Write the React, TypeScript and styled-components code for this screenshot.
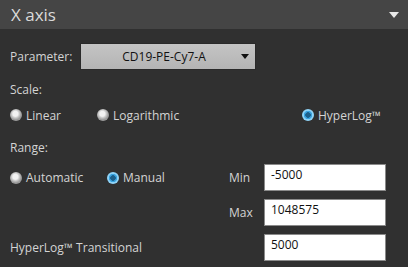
import styled, { createGlobalStyle } from 'styled-components';

const GlobalStyle = createGlobalStyle`
  html, body {
    margin: 0;
    padding: 0;
    background: #303030;
  }
  body {
    font-family: "Open Sans", "Liberation Sans", sans-serif;
  }
`;

const Panel = styled.div`
  width: 408px;
  height: 267px;
  background: #303030;
  color: #d4d4d4;
  font-size: 12px;
  display: flex;
  flex-direction: column;
  overflow: hidden;
`;

const Header = styled.div`
  height: 29px;
  background: #454545;
  display: flex;
  align-items: center;
  justify-content: space-between;
  padding: 0 9px 0 11px;
  font-size: 17px;
  color: #dadada;
`;

const HeaderArrow = styled.div`
  width: 0;
  height: 0;
  border-left: 5px solid transparent;
  border-right: 5px solid transparent;
  border-top: 6px solid #e8e8e8;
`;

const Body = styled.div`
  display: flex;
  flex-direction: column;
  padding: 14px 22px 0 10px;
`;

const Row = styled.div<{ $height: number; $mt?: number }>`
  display: flex;
  align-items: center;
  height: ${p => p.$height}px;
  margin-top: ${p => p.$mt ?? 0}px;
`;

const FieldLabel = styled.span`
  width: 70px;
  white-space: nowrap;
`;

const Select = styled.div`
  width: 176px;
  height: 27px;
  box-sizing: border-box;
  border: 1px solid #2a2a2a;
  background: linear-gradient(#c4c4c4, #b4b4b4);
  display: flex;
  align-items: center;
  color: #111;
  padding: 0 6px 0 0;
`;

const SelectText = styled.span`
  flex: 1;
  text-align: center;
  padding-left: 6px;
`;

const SelectArrow = styled.div`
  width: 0;
  height: 0;
  border-left: 4px solid transparent;
  border-right: 4px solid transparent;
  border-top: 5px solid #111;
`;

const RadioOption = styled.label<{ $width?: number }>`
  display: flex;
  align-items: center;
  gap: 4px;
  width: ${p => (p.$width ? `${p.$width}px` : 'auto')};
  white-space: nowrap;
`;

const RadioDot = styled.span<{ $checked?: boolean }>`
  width: 12px;
  height: 12px;
  border-radius: 50%;
  box-sizing: border-box;
  flex-shrink: 0;
  ${p =>
    p.$checked
      ? `background: radial-gradient(circle, #1c5f8a 0 2.5px, #3aa4e0 3px 4px, #8fd3f7 4.5px 6px);`
      : `background: radial-gradient(circle at 45% 40%, #f2f2f2 0 2.5px, #c8c8c8 4px, #9a9a9a 6px);`}
`;

const RangeGrid = styled.div`
  display: grid;
  grid-template-columns: 1fr 35px 122px;
  grid-auto-rows: 27px;
  row-gap: 8px;
  margin-top: 8px;
  align-items: center;
`;

const RadioGroup = styled.div`
  display: flex;
  align-items: center;
`;

const InputLabel = styled.span`
  white-space: nowrap;
`;

const NumberBox = styled.div`
  height: 27px;
  box-sizing: border-box;
  background: #fff;
  border: 1px solid #8a8a8a;
  color: #111;
  padding: 2px 6px;
  font-size: 12px;
  line-height: 16px;
`;

const Radio = ({ label, checked, width }: { label: string; checked?: boolean; width?: number }) => (
  <RadioOption $width={width}>
    <RadioDot $checked={checked} />
    {label}
  </RadioOption>
);

export default function App() {
  return (
    <Panel>
      <GlobalStyle />
      <Header>
        <span>X axis</span>
        <HeaderArrow />
      </Header>
      <Body>
        <Row $height={27}>
          <FieldLabel>Parameter:</FieldLabel>
          <Select>
            <SelectText>CD19-PE-Cy7-A</SelectText>
            <SelectArrow />
          </Select>
        </Row>
        <Row $height={18} $mt={10}>Scale:</Row>
        <Row $height={18} $mt={8}>
          <Radio label="Linear" width={87} />
          <Radio label="Logarithmic" width={205} />
          <Radio label="HyperLog™" checked />
        </Row>
        <Row $height={18} $mt={14}>Range:</Row>
        <RangeGrid>
          <RadioGroup>
            <Radio label="Automatic" width={97} />
            <Radio label="Manual" checked />
          </RadioGroup>
          <InputLabel>Min</InputLabel>
          <NumberBox>-5000</NumberBox>
          <span />
          <InputLabel>Max</InputLabel>
          <NumberBox>1048575</NumberBox>
          <InputLabel>HyperLog™ Transitional</InputLabel>
          <span />
          <NumberBox>5000</NumberBox>
        </RangeGrid>
      </Body>
    </Panel>
  );
}
